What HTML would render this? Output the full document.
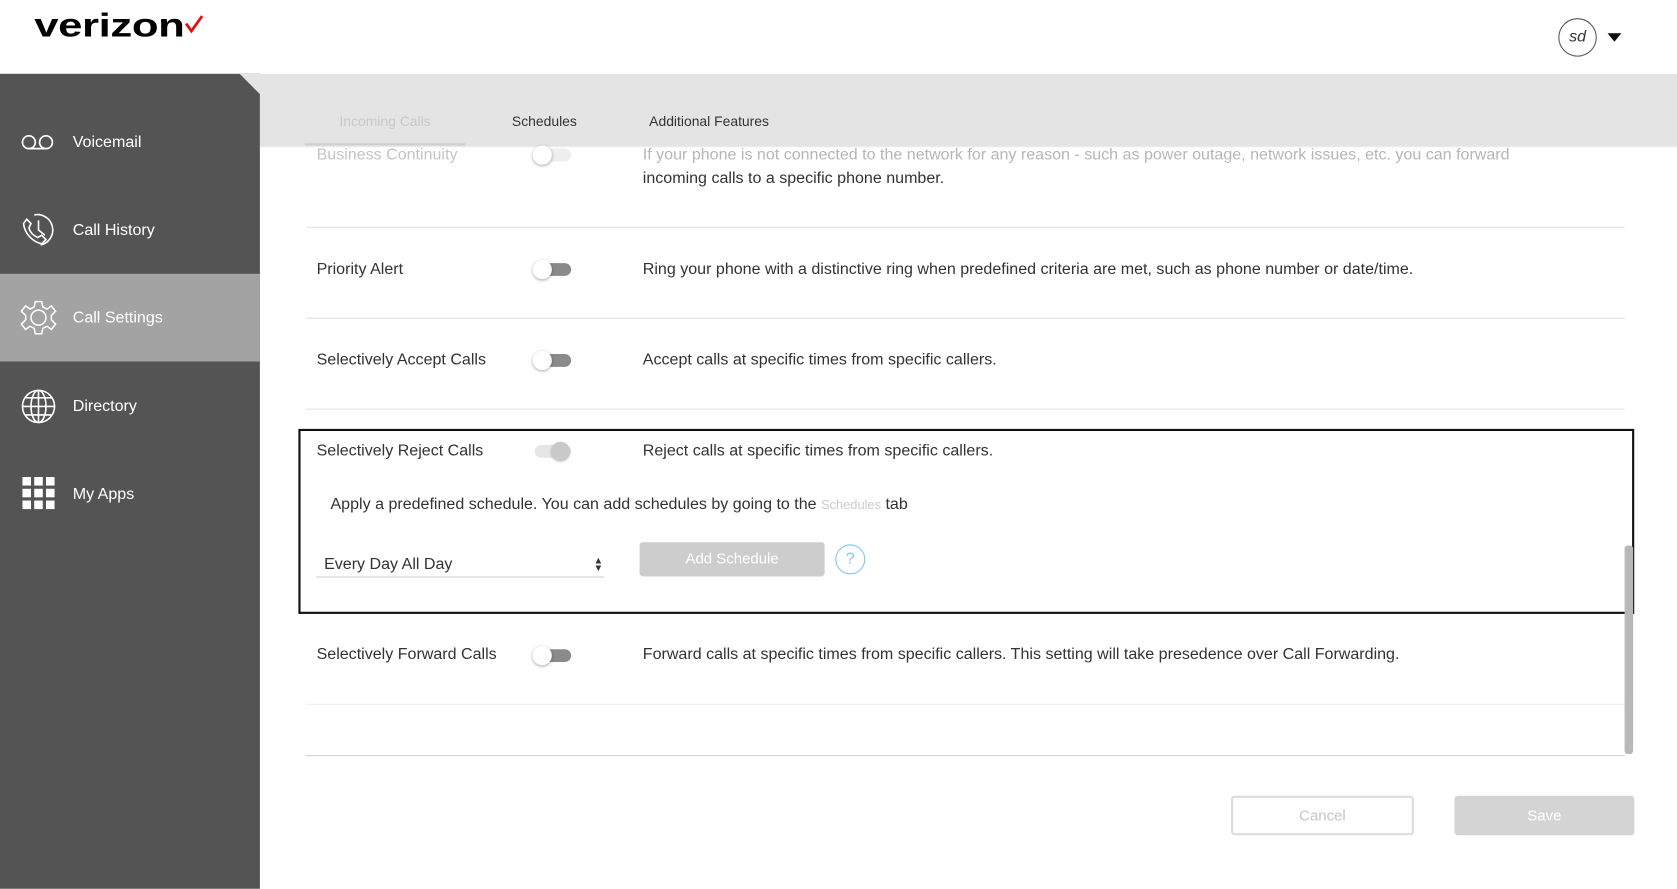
<!DOCTYPE html>
<html><head><meta charset="utf-8"><style>
html,body{margin:0;padding:0;width:1677px;height:889px;overflow:hidden;background:#fff;font-family:"Liberation Sans",Arial,sans-serif;}
#w{position:absolute;left:0;top:0;width:1568px;height:831px;transform:scale(1.06952);transform-origin:0 0;}
.a{position:absolute;}
.side{left:0;top:69px;width:243px;height:762px;background:#545454;}
.nav{position:absolute;left:0;width:243px;height:82px;color:#fff;font-size:15px;}
.nav span{position:absolute;left:68px;top:50%;transform:translateY(-50%);}
.nav svg{position:absolute;left:18px;top:50%;transform:translateY(-50%);}
.t{font-size:15px;color:#333;white-space:nowrap;}
.hr{position:absolute;left:286px;width:1233px;height:1px;background:#e2e2e2;}
.tg{position:absolute;width:34px;height:12px;border-radius:6px;background:#8a8a8a;}
.tg:after{content:"";position:absolute;left:-2px;top:-3px;width:18px;height:18px;border-radius:50%;background:#fff;box-shadow:0 1px 3px rgba(0,0,0,.35);}
</style></head><body><div id="w">
<div class="a" style="left:32px;top:6px;font-size:31px;font-weight:bold;letter-spacing:-0.3px;color:#000;transform:scaleX(1.32);transform-origin:0 0;">verizon</div>
<svg class="a" style="left:172px;top:13px" width="20" height="20"><path d="M2 9 L7 16 L17 2" stroke="#e01010" stroke-width="2.6" fill="none"/></svg>
<div class="a" style="left:1457px;top:17px;width:36px;height:36px;border:1.3px solid #555;border-radius:50%;box-sizing:border-box;text-align:center;line-height:34px;font-style:italic;font-size:15px;color:#333;">sd</div>
<svg class="a" style="left:1503px;top:31px" width="14" height="9"><path d="M0 0 L13 0 L6.5 8Z" fill="#111"/></svg>

<div class="a" style="left:243px;top:69px;width:1325px;height:68px;background:#e4e4e4;"></div>
<div class="a side"></div>
<svg class="a" style="left:224px;top:69px" width="20" height="21"><path d="M0 0 L20 0 L20 20Z" fill="#e4e4e4"/></svg>
<div class="a" style="left:0;top:256px;width:243px;height:82px;background:#a3a3a3;"></div>

<div class="nav" style="top:92px"><svg width="34" height="20"><circle cx="9" cy="10" r="6" stroke="#fff" stroke-width="1.6" fill="none"/><circle cx="25" cy="10" r="6" stroke="#fff" stroke-width="1.6" fill="none"/><path d="M9 16 H25" stroke="#fff" stroke-width="1.6"/></svg><span>Voicemail</span></div>
<div class="nav" style="top:174px"><svg width="36" height="36"><path d="M14 4 A14 14 0 1 1 20 32" stroke="#fff" stroke-width="1.5" fill="none"/><path d="M18 9 V18 L24 23" stroke="#fff" stroke-width="1.5" fill="none"/><path d="M7 8 L11 12 L9 16 C10 20 13 23 17 25 L21 23 L25 27 L21 31 C12 29 5 21 4 12Z" stroke="#fff" stroke-width="1.5" fill="none"/></svg><span>Call History</span></div>
<div class="nav" style="top:256px"><svg width="36" height="36" viewBox="0 0 36 36"><path d="M15 3 H21 L22 8 L26 10 L30 7 L34 12 L30 16 V20 L34 24 L30 29 L26 26 L22 28 L21 33 H15 L14 28 L10 26 L6 29 L2 24 L6 20 V16 L2 12 L6 7 L10 10 L14 8Z" stroke="#fff" stroke-width="1.4" fill="none"/><circle cx="18" cy="18" r="7" stroke="#fff" stroke-width="1.4" fill="none"/></svg><span>Call Settings</span></div>
<div class="nav" style="top:339px"><svg width="36" height="36"><circle cx="18" cy="18" r="15" stroke="#fff" stroke-width="1.5" fill="none"/><ellipse cx="18" cy="18" rx="7" ry="15" stroke="#fff" stroke-width="1.5" fill="none"/><path d="M18 3V33M3 18H33M6 10H30M6 26H30" stroke="#fff" stroke-width="1.5"/></svg><span>Directory</span></div>
<div class="nav" style="top:421px"><svg width="36" height="36"><g fill="#fff"><rect x="3" y="2" width="8" height="8"/><rect x="14" y="2" width="8" height="8"/><rect x="25" y="2" width="8" height="8"/><rect x="3" y="13" width="8" height="8"/><rect x="14" y="13" width="8" height="8"/><rect x="25" y="13" width="8" height="8"/><rect x="3" y="24" width="8" height="8"/><rect x="14" y="24" width="8" height="8"/><rect x="25" y="24" width="8" height="8"/></g></svg><span>My Apps</span></div>

<div class="a" style="left:285px;top:106px;width:150px;text-align:center;font-size:13px;color:#c8c8c8;">Incoming Calls</div>
<div class="a" style="left:285px;top:134px;width:150px;height:2px;background:#cfcfcf;"></div>
<div class="a" style="left:459px;top:106px;width:100px;text-align:center;font-size:13px;color:#333;">Schedules</div>
<div class="a" style="left:593px;top:106px;width:140px;text-align:center;font-size:13px;color:#333;">Additional Features</div>
<div class="a" style="left:243px;top:137px;width:1325px;height:1px;background:#f3f3f3;"></div>

<div class="a t" style="left:296px;top:136px;color:#c4c4c4;">Business Continuity</div>
<div class="tg" style="left:500px;top:139px;background:#eee;"></div>
<div class="a t" style="left:601px;top:136px;color:#b6b6b6;">If your phone is not connected to the network for any reason - such as power outage, network issues, etc. you can forward</div>
<div class="a t" style="left:601px;top:158px;">incoming calls to a specific phone number.</div>
<div class="hr" style="top:212px"></div>

<div class="a t" style="left:296px;top:243px;">Priority Alert</div>
<div class="tg" style="left:500px;top:246px;"></div>
<div class="a t" style="left:601px;top:243px;">Ring your phone with a distinctive ring when predefined criteria are met, such as phone number or date/time.</div>
<div class="hr" style="top:297px"></div>

<div class="a t" style="left:296px;top:328px;">Selectively Accept Calls</div>
<div class="tg" style="left:500px;top:331px;"></div>
<div class="a t" style="left:601px;top:328px;">Accept calls at specific times from specific callers.</div>
<div class="hr" style="top:382px"></div>

<div class="a" style="left:279px;top:401px;width:1245px;height:169px;border:2px solid #111;"></div>
<div class="a t" style="left:296px;top:413px;">Selectively Reject Calls</div>
<div class="a" style="left:500px;top:416px;width:34px;height:12px;border-radius:6px;background:#e6e6e6;"></div>
<div class="a" style="left:515px;top:413px;width:18px;height:18px;border-radius:50%;background:#c9c9c9;box-shadow:0 1px 2px rgba(0,0,0,.2);"></div>
<div class="a t" style="left:601px;top:413px;">Reject calls at specific times from specific callers.</div>
<div class="a t" style="left:309px;top:463px;">Apply a predefined schedule. You can add schedules by going to the <span style="font-size:12px;color:#ccc">Schedules</span> tab</div>
<div class="a t" style="left:303px;top:519px;">Every Day All Day</div>
<div class="a" style="left:555px;top:521px;font-size:9px;line-height:7px;color:#333;">▲<br>▼</div>
<div class="a" style="left:296px;top:539px;width:269px;height:1px;background:#ccc;"></div>
<div class="a" style="left:598px;top:507px;width:173px;height:32px;background:#cdcdcd;border-radius:3px;color:#fff;font-size:14px;text-align:center;line-height:31px;">Add Schedule</div>
<div class="a" style="left:781px;top:509px;width:26px;height:26px;border:1.5px solid #7cc8f0;border-radius:50%;color:#7cc8f0;text-align:center;line-height:26px;font-size:15px;">?</div>

<div class="a t" style="left:296px;top:603px;">Selectively Forward Calls</div>
<div class="tg" style="left:500px;top:607px;"></div>
<div class="a t" style="left:601px;top:603px;">Forward calls at specific times from specific callers. This setting will take presedence over Call Forwarding.</div>
<div class="hr" style="top:658px;background:#efefef"></div>
<div class="hr" style="top:706px;background:#cfcfcf"></div>
<div class="a" style="left:1519px;top:510px;width:8px;height:195px;background:#b8b8b8;border-radius:3px;"></div>

<div class="a" style="left:1151px;top:744px;width:171px;height:37px;border:2px solid #ddd;box-sizing:border-box;border-radius:3px;text-align:center;line-height:33px;color:#c5c5c5;font-size:14px;">Cancel</div>
<div class="a" style="left:1360px;top:744px;width:168px;height:37px;background:#d4d4d4;border-radius:3px;text-align:center;line-height:37px;color:#fff;font-size:14px;">Save</div>
</div></body></html>
